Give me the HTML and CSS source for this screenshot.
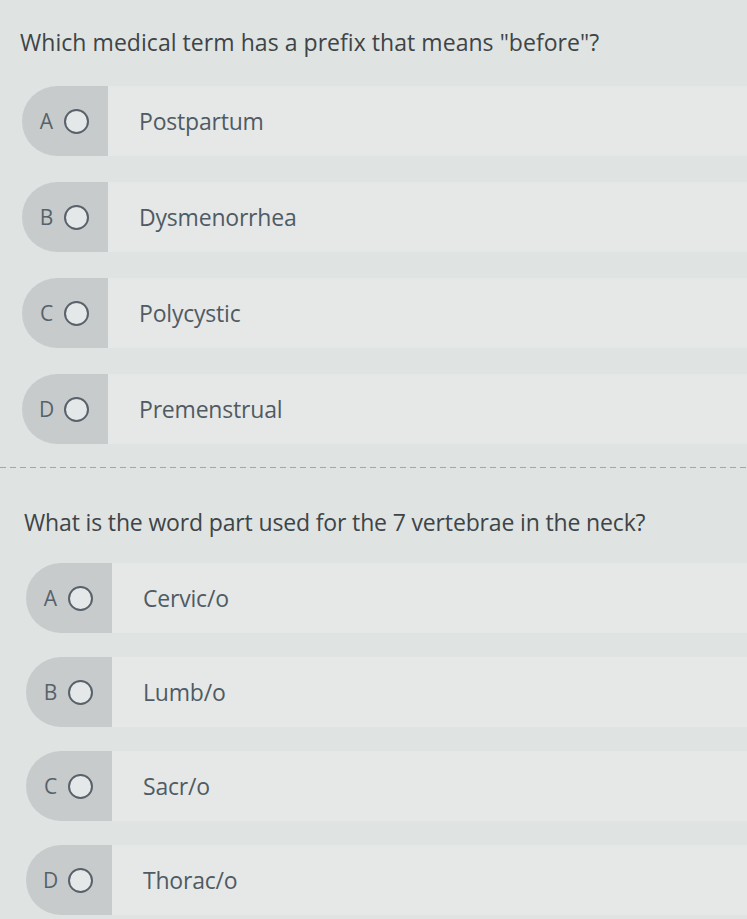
FILE: index.html
```html
<!DOCTYPE html>
<html lang="en">
<head>
<meta charset="utf-8">
<title>Quiz</title>
<link rel="stylesheet" href="styles.css">
</head>
<body>
<main class="page">
  <section class="question q1">
    <h2 class="title">Which medical term has a prefix that means "before"?</h2>
    <ul class="options">
      <li class="option"><span class="tab"><span class="letter">A</span><span class="radio"></span></span><span class="band">Postpartum</span></li>
      <li class="option"><span class="tab"><span class="letter">B</span><span class="radio"></span></span><span class="band">Dysmenorrhea</span></li>
      <li class="option"><span class="tab"><span class="letter">C</span><span class="radio"></span></span><span class="band">Polycystic</span></li>
      <li class="option"><span class="tab"><span class="letter">D</span><span class="radio"></span></span><span class="band">Premenstrual</span></li>
    </ul>
  </section>
  <div class="divider"></div>
  <section class="question q2">
    <h2 class="title">What is the word part used for the 7 vertebrae in the neck?</h2>
    <ul class="options">
      <li class="option"><span class="tab"><span class="letter">A</span><span class="radio"></span></span><span class="band">Cervic/o</span></li>
      <li class="option"><span class="tab"><span class="letter">B</span><span class="radio"></span></span><span class="band">Lumb/o</span></li>
      <li class="option"><span class="tab"><span class="letter">C</span><span class="radio"></span></span><span class="band">Sacr/o</span></li>
      <li class="option"><span class="tab"><span class="letter">D</span><span class="radio"></span></span><span class="band">Thorac/o</span></li>
    </ul>
  </section>
</main>
</body>
</html>
```
FILE: styles.css
```css
html, body {
  margin: 0;
  padding: 0;
}
body {
  background: #dfe3e2;
  font-family: "Open Sans", "Noto Sans", "DejaVu Sans", sans-serif;
  width: 747px;
  height: 919px;
  overflow: hidden;
}
.page {
  display: flex;
  flex-direction: column;
}
.question {
  display: flex;
  flex-direction: column;
}
.q1 {
  padding-top: 27px;
}
.title {
  margin: 0;
  font-size: 23px;
  line-height: 30px;
  font-weight: 400;
  color: #3e4447;
  white-space: nowrap;
}
.q1 .title {
  padding-left: 20px;
  letter-spacing: 0.05px;
}
.q2 .title {
  padding-left: 24px;
  letter-spacing: -0.15px;
}
.options {
  list-style: none;
  margin: 0;
  padding: 0;
  display: flex;
  flex-direction: column;
}
.q1 .options {
  margin-top: 29px;
  gap: 26px;
  padding-left: 22px;
}
.q2 .options {
  margin-top: 26px;
  gap: 24px;
  padding-left: 26px;
}
.option {
  display: flex;
  height: 70px;
}
.tab {
  width: 86px;
  flex: none;
  background: #c8cbcb;
  border-radius: 35px 0 0 35px;
  display: flex;
  align-items: center;
  padding-left: 17px;
  box-sizing: border-box;
  gap: 10px;
}
.letter {
  font-size: 21px;
  color: #56626b;
  width: 15px;
  text-align: center;
}
.radio {
  width: 21px;
  height: 21px;
  border: 2px solid #59626a;
  border-radius: 50%;
  background: #e4e8e9;
  box-sizing: content-box;
}
.band {
  flex: 1;
  background: #e6e8e7;
  display: flex;
  align-items: center;
  padding-left: 31px;
  font-size: 23px;
  color: #4f5b64;
  letter-spacing: -0.2px;
}
.divider {
  margin-top: 23px;
  height: 1px;
  background: repeating-linear-gradient(to right, #a2a8aa 0 6px, transparent 6px 10px);
}
.q2 {
  padding-top: 39px;
}
```
